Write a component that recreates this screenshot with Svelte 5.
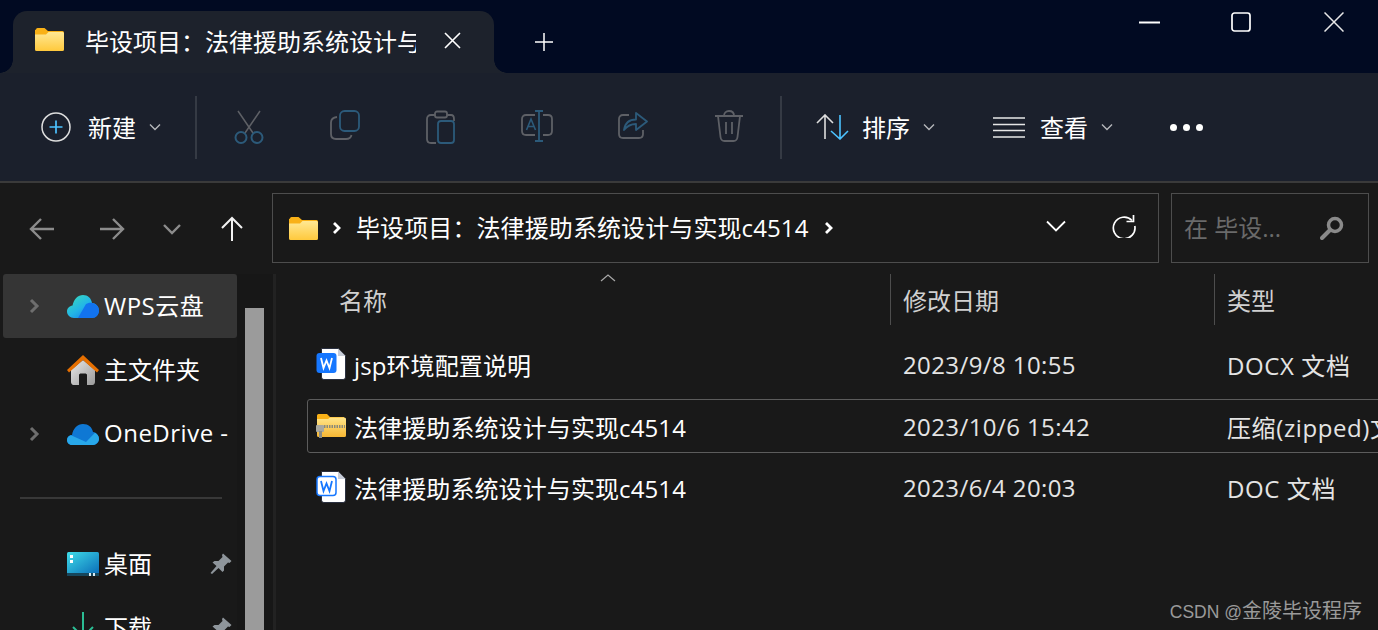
<script>
	const files = [
		{ name: 'jsp环境配置说明', date: '2023/9/8 10:55', type: 'DOCX 文档', icon: 'docx' },
		{ name: '法律援助系统设计与实现c4514', date: '2023/10/6 15:42', type: '压缩(zipped)文件夹', icon: 'zip', active: true },
		{ name: '法律援助系统设计与实现c4514', date: '2023/6/4 20:03', type: 'DOC 文档', icon: 'doc' }
	];
</script>

{#snippet chevron(cls)}
	<svg class={cls} width="12" height="8" viewBox="0 0 12 8"><path d="M1 1.5 6 6.5 11 1.5" fill="none" stroke="currentColor" stroke-width="1.4"/></svg>
{/snippet}

{#snippet folder()}
	<svg width="29" height="23" viewBox="0 0 29 23">
		<defs><linearGradient id="fld" x1="0" y1="0" x2="0" y2="1"><stop offset="0" stop-color="#ffe894"/><stop offset="1" stop-color="#ffc93c"/></linearGradient></defs>
		<path d="M1 1.5A1.5 1.5 0 0 1 2.500 0H9.500L13 3H27.500A1.500 1.500 0 0 1 29 4.500V8H0V2Z" fill="#f9b117"/>
		<path d="M0 6.500H11L13.500 4H27.500A1.500 1.500 0 0 1 29 5.500V21.500A1.500 1.500 0 0 1 27.500 23H1.500A1.500 1.500 0 0 1 0 21.500Z" fill="url(#fld)"/>
	</svg>
{/snippet}

{#snippet pin()}
	<svg class="pin" width="22" height="22" viewBox="0 0 22 22"><path d="M13 0.500 21.500 8 19.500 10 18 9.500 14 13.500 14 17.500 12.500 19 8.500 15 2 21 0.500 20 6.500 13 2.500 9.500 4.500 8 8.500 8 12.500 4 12 2Z" fill="#8e959b"/></svg>
{/snippet}

{#snippet side()}
	<svg class="side-chev" width="11" height="16" viewBox="0 0 11 16"><path d="M2 2 8 8 2 14" fill="none" stroke="#6e6e6e" stroke-width="3"/></svg>
{/snippet}

<div class="window">
	<header class="titlebar">
		<div class="tab">
			<span class="tab-folder">{@render folder()}</span>
			<span class="tab-title">毕设项目：法律援助系统设计与实现c4514</span>
			<svg class="tab-close" width="17" height="17" viewBox="0 0 17 17"><path d="M1 1 16 16M16 1 1 16" stroke="#fff" stroke-width="1.600"/></svg>
		</div>
		<svg class="plus" width="20" height="20" viewBox="0 0 20 20"><path d="M10 1V19M1 10H19" stroke="#fff" stroke-width="1.500"/></svg>
		<div class="winbtns">
			<svg width="21" height="3" viewBox="0 0 21 3" class="w-min"><path d="M0 1.500H21" stroke="#fff" stroke-width="2"/></svg>
			<svg width="20" height="20" viewBox="0 0 20 20" class="w-max"><rect x="1" y="1" width="18" height="18" rx="2.500" fill="none" stroke="#fff" stroke-width="1.700"/></svg>
			<svg width="20" height="20" viewBox="0 0 20 20" class="w-close"><path d="M0.500 0.500 19.500 19.500M19.500 0.500 0.500 19.500" stroke="#e8e8e8" stroke-width="1.500"/></svg>
		</div>
	</header>

	<div class="toolbar">
		<div class="tool new">
			<svg width="30" height="30" viewBox="0 0 30 30"><circle cx="15" cy="15" r="14" fill="none" stroke="#dedede" stroke-width="1.500"/><path d="M15 8.500V21.500M8.500 15H21.500" stroke="#4cc2ff" stroke-width="1.700"/></svg>
			<span class="tool-label">新建</span>
			{@render chevron('tool-chev')}
		</div>
		<i class="vsep"></i>
		<div class="tool-icons">
			<div class="icon-btn">
				<svg width="30" height="34" viewBox="0 0 30 34"><path d="M4 1 19 23M26 1 11 23" stroke="#5e6066" stroke-width="1.500" fill="none"/><circle cx="7" cy="27.500" r="5.500" fill="none" stroke="#2c5a7a" stroke-width="2"/><circle cx="23" cy="27.500" r="5.500" fill="none" stroke="#2c5a7a" stroke-width="2"/></svg>
			</div>
			<div class="icon-btn">
				<svg width="30" height="30" viewBox="0 0 30 30"><path d="M7 7C3.500 7.500 1 9.500 1 12.500V24C1 27 3 29 6 29H16C19 29 21 27.500 21.500 25" fill="none" stroke="#5e6066" stroke-width="1.800"/><rect x="10" y="1" width="19" height="20" rx="4.500" fill="none" stroke="#2c5a7a" stroke-width="1.800"/></svg>
			</div>
			<div class="icon-btn">
				<svg width="30" height="34" viewBox="0 0 30 34"><path d="M9 5H5C2.500 5 1 6.500 1 9V29C1 31.500 2.500 33 5 33H10M21 5H25C27 5 28 6.500 28 9V11" fill="none" stroke="#5e6066" stroke-width="1.800"/><rect x="9" y="1.500" width="12" height="6" rx="2" fill="none" stroke="#5e6066" stroke-width="1.800"/><rect x="12" y="11" width="16" height="22" rx="3" fill="none" stroke="#2c5a7a" stroke-width="1.800"/></svg>
			</div>
			<div class="icon-btn">
				<svg width="32" height="32" viewBox="0 0 32 32"><path d="M14 5H5C2.500 5 1 6.500 1 9V21C1 23.500 2.500 25 5 25H14M22 5H27C29.500 5 31 6.500 31 9V21C31 23.500 29.500 25 27 25H22" fill="none" stroke="#5e6066" stroke-width="1.800"/><path d="M14 1H22M18 1V31M14 31H22" fill="none" stroke="#2c5a7a" stroke-width="1.800"/><path d="M5.500 20 10 9 14.500 20M7 16.500H13" fill="none" stroke="#2c5a7a" stroke-width="1.600"/></svg>
			</div>
			<div class="icon-btn">
				<svg width="30" height="30" viewBox="0 0 30 30"><path d="M11 5H5C2.500 5 1 6.500 1 9V24C1 26.500 2.500 28 5 28H21C23.500 28 25 26.500 25 24V20" fill="none" stroke="#5e6066" stroke-width="1.800"/><path d="M6 20C7 13 11.500 9.500 18 9.500V3L29 11.500 18 20V14C13 14 9.500 15.500 6 20Z" fill="none" stroke="#2c5a7a" stroke-width="1.800" stroke-linejoin="round"/></svg>
			</div>
			<div class="icon-btn">
				<svg width="30" height="32" viewBox="0 0 30 32"><path d="M1 6H29M10 6C10 3 12 1 15 1S20 3 20 6M4 6 6.500 27C6.800 29.500 8 31 10.500 31H19.500C22 31 23.200 29.500 23.500 27L26 6M12 12V24M18 12V24" fill="none" stroke="#5e6066" stroke-width="1.800"/></svg>
			</div>
		</div>
		<i class="vsep second"></i>
		<div class="tool sort">
			<svg width="33" height="26" viewBox="0 0 33 26"><path d="M9 25V1M1 9 9 1 17 9" fill="none" stroke="#dedede" stroke-width="1.600"/><path d="M24 1V25M15 17 24 25 32 17" fill="none" stroke="#4cc2ff" stroke-width="1.600"/></svg>
			<span class="tool-label">排序</span>
			{@render chevron('tool-chev')}
		</div>
		<div class="tool view">
			<svg width="32" height="21" viewBox="0 0 32 21"><path d="M0 1H32M0 7.500H32M0 13.500H32M0 20H32" stroke="#e6e6e6" stroke-width="1.500"/></svg>
			<span class="tool-label">查看</span>
			{@render chevron('tool-chev')}
		</div>
		<div class="dots"><b></b><b></b><b></b></div>
	</div>

	<div class="addressbar">
		<div class="nav">
			<svg class="n-back" width="26" height="24" viewBox="0 0 26 24"><path d="M25 12H2M12 2 2 12 12 22" fill="none" stroke="#8c8c8c" stroke-width="2.400"/></svg>
			<svg class="n-fwd" width="26" height="24" viewBox="0 0 26 24"><path d="M1 12H24M14 2 24 12 14 22" fill="none" stroke="#8c8c8c" stroke-width="2.400"/></svg>
			<svg class="n-down" width="20" height="12" viewBox="0 0 20 12"><path d="M2 2 10 10 18 2" fill="none" stroke="#8c8c8c" stroke-width="2.400"/></svg>
			<svg class="n-up" width="24" height="26" viewBox="0 0 24 26"><path d="M12 25V2M2 12 12 2 22 12" fill="none" stroke="#f2f2f2" stroke-width="2"/></svg>
		</div>
		<div class="path">
			{@render folder()}
			<svg class="crumb first" width="10" height="14" viewBox="0 0 10 14"><path d="M2 2 7 7 2 12" fill="none" stroke="#fff" stroke-width="2.800"/></svg>
			<span class="path-text">毕设项目：法律援助系统设计与实现c4514</span>
			<svg class="crumb" width="10" height="14" viewBox="0 0 10 14"><path d="M2 2 7 7 2 12" fill="none" stroke="#fff" stroke-width="2.800"/></svg>
			<svg class="path-down" width="20" height="12" viewBox="0 0 20 12"><path d="M1 1.500 10 10.500 19 1.500" fill="none" stroke="#fff" stroke-width="1.800"/></svg>
			<svg class="refresh" width="24" height="24" viewBox="0 0 24 24"><path d="M20 6.500A10.800 10.800 0 1 0 22.800 12" fill="none" stroke="#fff" stroke-width="1.700"/><path d="M21.500 1V7.500H14.500" fill="none" stroke="#fff" stroke-width="1.700"/></svg>
		</div>
		<div class="search">
			<span>在 毕设...</span>
			<svg width="24" height="24" viewBox="0 0 24 24"><circle cx="15" cy="9" r="6.500" fill="none" stroke="#8a8a8a" stroke-width="3.500"/><path d="M10 14 2 22" stroke="#8a8a8a" stroke-width="4" stroke-linecap="round"/></svg>
		</div>
	</div>

	<div class="content">
		<nav class="sidebar">
			<div class="s-row selected">
				{@render side()}
				<svg class="s-icon" width="32" height="23" viewBox="0 0 32 23">
					<defs><linearGradient id="wps" x1="0" y1="0" x2="1" y2="1"><stop offset="0" stop-color="#3ce0b4"/><stop offset="0.500" stop-color="#22b5e8"/><stop offset="1" stop-color="#1166ee"/></linearGradient></defs>
					<path d="M7 23C3 23 0 20 0 16.500S2.500 11 5.500 10.500C7 4 11 0 16 0S24 3 25 8C29 8.500 32 11.500 32 15.500S29 23 25 23Z" fill="url(#wps)"/>
					<path d="M11 23 19 9C22 7.500 24 7.500 25 8 29 8.500 32 11.500 32 15.500S29 23 25 23Z" fill="#1273ee"/>
				</svg>
				<span class="latin">WPS云盘</span>
			</div>
			<div class="s-row">
				<i class="s-gap"></i>
				<svg class="s-icon" width="32" height="30" viewBox="0 0 32 30">
					<defs><linearGradient id="hm" x1="0" y1="0" x2="1" y2="1"><stop offset="0" stop-color="#e8e8e8"/><stop offset="1" stop-color="#9a9a9a"/></linearGradient></defs>
					<path d="M4 15 16 5 28 15V27C28 28.500 27 30 25.500 30H20V20C20 19 19 18.500 18 18.500H14C13 18.500 12 19 12 20V30H6.500C5 30 4 28.500 4 27Z" fill="url(#hm)"/>
					<path d="M0 15 16 0 32 15 30 17.500 16 5 2 17.500Z" fill="#e66f00"/>
				</svg>
				<span>主文件夹</span>
			</div>
			<div class="s-row">
				{@render side()}
				<svg class="s-icon" width="32" height="21" viewBox="0 0 32 21">
					<path d="M5 21C2 21 0 18.500 0 16S2 11 5 11C6 4.500 10.500 0 16 0S25 3 26 8C29.500 8.500 32 11.500 32 15S29 21 26 21Z" fill="#0f78d4"/>
					<path d="M5 21C2 21 0 18.500 0 16S2 11.500 4 11.200L19 18 28 8.800C30.500 10 32 12.500 32 15S29 21 26 21Z" fill="#28a8ea"/>
				</svg>
				<span class="latin">OneDrive - </span>
			</div>
			<hr class="s-sep" />
			<div class="s-row pinned">
				<i class="s-gap"></i>
				<svg class="s-icon" width="32" height="24" viewBox="0 0 32 24">
					<defs><linearGradient id="dk" x1="0" y1="0" x2="1" y2="1"><stop offset="0" stop-color="#3fdce8"/><stop offset="1" stop-color="#0a6cb8"/></linearGradient></defs>
					<rect width="32" height="22" rx="1.500" fill="url(#dk)"/>
					<rect y="21" width="32" height="3" fill="#16465c"/>
					<rect x="3" y="3" width="3" height="3" fill="#fff"/><rect x="3" y="8" width="3" height="3" fill="#fff"/>
					<rect x="22" y="21" width="2" height="3" fill="#d8e8f0"/><rect x="26" y="21" width="2" height="3" fill="#d8e8f0"/>
				</svg>
				<span>桌面</span>
				{@render pin()}
			</div>
			<div class="s-row pinned">
				<i class="s-gap"></i>
				<svg class="s-icon" width="32" height="32" viewBox="0 0 32 32"><path d="M16 0V25M6 15 16 25 26 15" fill="none" stroke="#2bbd94" stroke-width="2"/></svg>
				<span>下载</span>
				{@render pin()}
			</div>
		</nav>
		<div class="scroll"><div class="thumb"></div></div>
		<main class="list">
			<div class="head">
				<div class="c-name">名称<svg class="caret" width="16" height="8" viewBox="0 0 16 8"><path d="M1 7 8 1 15 7" fill="none" stroke="#a8a8a8" stroke-width="1.200"/></svg></div>
				<div class="c-date">修改日期</div>
				<div class="c-type">类型</div>
			</div>
			{#each files as f}
				<div class="row" class:active={f.active}>
					<div class="f-name">
						{#if f.icon === 'zip'}
							<svg class="f-icon" width="30" height="24" viewBox="0 0 30 24">
								<defs><linearGradient id="zp" x1="0" y1="0" x2="0" y2="1"><stop offset="0" stop-color="#ffe58a"/><stop offset="1" stop-color="#f7b733"/></linearGradient></defs>
								<path d="M1 1.500A1.500 1.500 0 0 1 2.500 0H11L14 3H28V8H1Z" fill="#f9b117"/>
								<path d="M1 5H12L14 3.500H28.500A1.500 1.500 0 0 1 30 5V21.500A1.500 1.500 0 0 1 28.500 23H2.500A1.500 1.500 0 0 1 1 21.500Z" fill="url(#zp)"/>
								<path d="M8 12.500H29" stroke="#8a8a7a" stroke-width="3" stroke-dasharray="1.500 1"/>
								<rect x="0" y="11" width="8" height="7" rx="1" fill="#a8a8a0"/>
								<rect x="3" y="17" width="3" height="7" fill="#8c8c84"/>
							</svg>
						{:else}
							<svg class="f-icon" width="30" height="32" viewBox="0 0 30 32">
								<path d="M6 0.500H22L29.500 8V29C29.500 30.500 28.500 31.500 27 31.500H8C6.500 31.500 5.500 30.500 5.500 29V1Z" fill="#fff" stroke="#2a3040"/>
								<path d="M22 0.500V8H29.500Z" fill="#c8cdd8"/>
								{#if f.icon === 'docx'}
									<rect x="0.500" y="5" width="20" height="20" rx="3" fill="#1677ff"/>
									<path d="M5 10 7.500 20 10.500 12.500 13.500 20 16 10" fill="none" stroke="#fff" stroke-width="1.800"/>
								{:else}
									<rect x="1" y="5.500" width="19" height="19" rx="3" fill="#fff" stroke="#1677ff" stroke-width="1.500"/>
									<path d="M5 10 7.500 20 10.500 12.500 13.500 20 16 10" fill="none" stroke="#1677ff" stroke-width="1.800"/>
								{/if}
							</svg>
						{/if}
						<span>{f.name}</span>
					</div>
					<div class="f-date">{f.date}</div>
					<div class="f-type">{f.type}</div>
				</div>
			{/each}
		</main>
	</div>
	<div class="watermark"><span>CSDN @</span>金陵毕设程序</div>
</div>

<style>
	:global(body) {
		margin: 0;
		background: #191919;
	}

	.window {
		position: relative;
		width: 1378px;
		height: 630px;
		overflow: hidden;
		background: #191919;
		color: #fff;
		font-family: "Open Sans", "Noto Sans CJK SC", sans-serif;
		font-size: 24px;
	}

	svg {
		display: block;
		flex: none;
	}

	.titlebar {
		display: flex;
		align-items: flex-start;
		height: 73px;
		box-sizing: border-box;
		padding: 11px 0 0 13px;
		background: #010a22;
	}

	.tab {
		position: relative;
		display: flex;
		align-items: center;
		width: 481px;
		height: 62px;
		background: #1d222c;
		border-radius: 14px 14px 0 0;
	}

	.tab::before,
	.tab::after {
		content: "";
		position: absolute;
		bottom: 0;
		width: 13px;
		height: 13px;
	}

	.tab::before {
		left: -13px;
		background: radial-gradient(circle at 0 0, transparent 12.500px, #1d222c 13px);
	}

	.tab::after {
		right: -13px;
		background: radial-gradient(circle at 100% 0, transparent 12.500px, #1d222c 13px);
	}

	.tab-folder {
		margin: -6px 0 0 22px;
	}

	.tab-title {
		width: 331px;
		margin: -4px 0 0 21px;
		overflow: hidden;
		white-space: nowrap;
		flex: none;
	}

	.tab-close {
		margin: -4px 0 0 28px;
	}

	.plus {
		margin: 21px 0 0 40px;
	}

	.winbtns {
		display: flex;
		align-items: flex-start;
		margin-left: auto;
		padding-right: 34px;
	}

	.w-min {
		margin-top: 10px;
	}

	.w-max {
		margin: 1px 0 0 71px;
	}

	.w-close {
		margin: 1px 0 0 73px;
	}

	.toolbar {
		display: flex;
		align-items: center;
		box-sizing: border-box;
		padding: 0 0 0 41px;
		background: #1b202c;
		border-bottom: 2px solid #3a3a3a;
		height: 110px;
	}

	.tool {
		display: flex;
		align-items: center;
	}

	.tool-label {
		margin: 2px 0 0 17px;
		line-height: 30px;
	}

	.tool-chev {
		margin: 0 0 0 13px;
		color: #b5b7bb;
	}

	.new {
		width: 154px;
		flex: none;
	}

	.vsep {
		width: 2px;
		height: 63px;
		background: #353a44;
		flex: none;
	}

	.vsep.second {
		margin-left: 3px;
	}

	.tool-icons {
		display: flex;
		margin-left: 4px;
	}

	.icon-btn {
		display: flex;
		justify-content: center;
		width: 96px;
	}

	.sort {
		margin-left: 34px;
	}

	.sort .tool-label {
		margin-left: 13px;
	}

	.view {
		margin-left: 58px;
	}

	.view .tool-label {
		margin-left: 15px;
	}

	.dots {
		display: flex;
		gap: 6px;
		margin-left: 57px;
	}

	.dots b {
		width: 7px;
		height: 7px;
		border-radius: 50%;
		background: #fff;
	}

	.addressbar {
		display: flex;
		align-items: flex-start;
		height: 91px;
		box-sizing: border-box;
		padding-top: 10px;
	}

	.nav {
		display: flex;
		align-items: center;
		flex: none;
		width: 272px;
		height: 72px;
		padding-left: 29px;
		box-sizing: border-box;
	}

	.n-fwd {
		margin-left: 44px;
	}

	.n-down {
		margin-left: 37px;
	}

	.n-up {
		margin-left: 38px;
	}

	.path,
	.search {
		display: flex;
		align-items: center;
		flex: none;
		height: 70px;
		box-sizing: border-box;
		border: 1px solid #4d4d4d;
	}

	.path {
		width: 887px;
		padding-left: 16px;
	}

	.path-text {
		margin: 0 0 3px 14px;
		white-space: nowrap;
		letter-spacing: 0.1px;
	}

	.crumb.first {
		margin-left: 14px;
	}

	.crumb {
		margin-left: 15px;
	}

	.path-down {
		margin: -4px 0 0 auto;
	}

	.refresh {
		margin: -4px 22px 0 46px;
	}

	.search {
		width: 198px;
		margin-left: 12px;
		padding: 0 24px 0 12px;
		justify-content: space-between;
		color: #6a6a6a;
	}

	.search span {
		margin-bottom: 3px;
	}

	.content {
		display: flex;
		height: 356px;
	}

	.sidebar {
		flex: none;
		width: 237px;
		padding-left: 3px;
		box-sizing: border-box;
		overflow: hidden;
	}

	.s-row {
		display: flex;
		align-items: center;
		height: 64px;
		padding-left: 26px;
		white-space: nowrap;
	}

	.s-row span {
		margin-bottom: 3px;
	}

	.s-row .latin {
		letter-spacing: 0.5px;
	}

	.selected {
		background: #353535;
		border-radius: 3px;
	}

	.s-gap {
		width: 11px;
		flex: none;
	}

	.s-icon {
		margin: 0 5px 0 27px;
	}

	.s-sep {
		width: 202px;
		height: 2px;
		margin: 31px 0 33px 17px;
		border: 0;
		background: #383838;
	}

	.pin {
		margin-left: auto;
		margin-right: 5px;
	}

	.scroll {
		flex: none;
		width: 39px;
		box-sizing: border-box;
		padding: 34px 0 0 8px;
		background: #171717;
		border-right: 3px solid #222;
	}

	.thumb {
		width: 19px;
		height: 330px;
		background: #9b9b9b;
	}

	.list {
		flex: 1;
		min-width: 0;
		padding-left: 31px;
	}

	.head {
		position: relative;
		display: flex;
		height: 51px;
		color: #d0d0d0;
		margin-bottom: 8px;
	}

	.head > div {
		display: flex;
		align-items: center;
		height: 51px;
		box-sizing: border-box;
	}

	.caret {
		position: absolute;
		left: 293px;
		top: 0;
	}

	.c-name {
		width: 583px;
		padding-left: 32px;
		flex: none;
	}

	.c-date {
		width: 324px;
		padding-left: 12px;
		flex: none;
		border-left: 1px solid #4d4d4d;
	}

	.c-type {
		width: 160px;
		padding-left: 12px;
		flex: none;
		border-left: 1px solid #4d4d4d;
	}

	.row {
		display: flex;
		align-items: center;
		height: 62px;
		white-space: nowrap;
		width: 1100px;
		color: #fff;
		box-sizing: border-box;
		border: 1px solid transparent;
	}

	.row.active {
		height: 54px;
		margin: 4px 0 3px;
		border-color: #5c5c5c;
		border-radius: 3px;
	}

	.f-name {
		display: flex;
		align-items: center;
		flex: none;
		width: 583px;
		padding-left: 8px;
		box-sizing: border-box;
		letter-spacing: 0.1px;
	}

	.f-icon {
		margin-right: 8px;
	}

	.f-date {
		flex: none;
		width: 324px;
		padding-left: 12px;
		box-sizing: border-box;
		color: #e4e4e4;
		letter-spacing: 0.4px;
	}

	.f-type {
		flex: none;
		padding-left: 12px;
		color: #e4e4e4;
		letter-spacing: 0.6px;
	}

	.watermark {
		position: absolute;
		right: 16px;
		bottom: 6px;
		font-family: "Liberation Sans", "Noto Sans CJK SC", sans-serif;
		font-size: 20px;
		color: #9a9a9a;
	}

	.watermark span {
		font-size: 17.500px;
	}
</style>
